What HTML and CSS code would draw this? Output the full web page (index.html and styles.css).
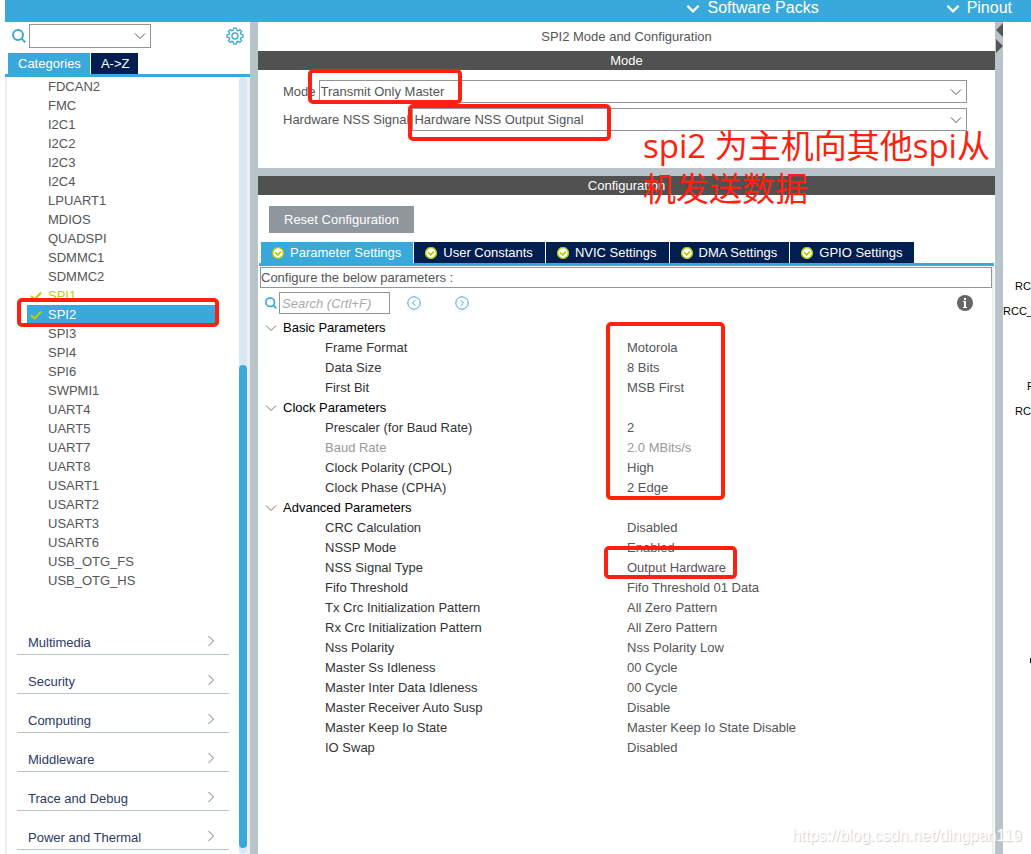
FILE: index.html
```html
<!DOCTYPE html>
<html lang="en">

<head>
  <meta charset="UTF-8" />
  <title>SPI2 Mode and Configuration</title>
  <link rel="stylesheet" href="styles.css">
</head>

<body>
  <!-- shared icons -->
  <svg class="defs" width="0" height="0">
    <symbol id="down" viewBox="0 0 12 8"><path d="M1 1.5 L6 6.5 L11 1.5" /></symbol>
    <symbol id="next" viewBox="0 0 8 12"><path d="M1.5 1 L6.5 6 L1.5 11" /></symbol>
    <symbol id="search" viewBox="0 0 14 14"><circle cx="6" cy="6" r="5" /><path d="M9.6 9.6 L13.2 13.2" /></symbol>
    <symbol id="tick" viewBox="0 0 12 10"><path d="M1 5 L4.5 8.5 L11 1.5" /></symbol>
    <symbol id="ok" viewBox="0 0 12 12"><circle cx="6" cy="6" r="5.4" fill="#fff" /><path d="M3 5.2 L5.7 7.9 L9 4.6" /></symbol>
  </svg>

  <div class="app">
    <header class="topbar">
      <button class="menu"><svg class="chev"><use href="#down" /></svg>Software Packs</button>
      <button class="menu"><svg class="chev"><use href="#down" /></svg>Pinout</button>
    </header>

    <div class="work">
      <aside class="side">
        <div class="side-top">
          <svg class="search"><use href="#search" /></svg>
          <div class="combo find">
            <select aria-label="Find peripheral"><option></option></select>
            <svg class="arrow"><use href="#down" /></svg>
          </div>
          <button class="gear" aria-label="Settings">
            <svg viewBox="0 0 18 18"><path d="M7.6 1.2 L10.4 1.2 L10.8 3.2 L12.2 3.8 L13.9 2.7 L15.6 4.5 L14.5 6.1 L15 7.5 L17 7.9 L17 10.2 L15 10.6 L14.4 12 L15.6 13.7 L13.8 15.4 L12.1 14.3 L10.8 14.8 L10.4 16.8 L7.6 16.8 L7.2 14.8 L5.9 14.3 L4.2 15.4 L2.4 13.7 L3.6 12 L3 10.6 L1 10.2 L1 7.9 L3 7.5 L3.5 6.1 L2.4 4.5 L4.1 2.7 L5.8 3.8 L7.2 3.2 Z" /><circle cx="9" cy="9" r="3" /></svg>
          </button>
        </div>
        <nav class="side-tabs">
          <button class="tab on">Categories</button>
          <button class="tab">A-&gt;Z</button>
        </nav>
        <div class="side-body">
          <div class="tree">
            <ul class="periphs">
              <li>FDCAN2</li>
              <li>FMC</li>
              <li>I2C1</li>
              <li>I2C2</li>
              <li>I2C3</li>
              <li>I2C4</li>
              <li>LPUART1</li>
              <li>MDIOS</li>
              <li>QUADSPI</li>
              <li>SDMMC1</li>
              <li>SDMMC2</li>
              <li class="used"><svg class="tick"><use href="#tick" /></svg>SPI1</li>
              <li class="used current"><svg class="tick"><use href="#tick" /></svg>SPI2</li>
              <li>SPI3</li>
              <li>SPI4</li>
              <li>SPI6</li>
              <li>SWPMI1</li>
              <li>UART4</li>
              <li>UART5</li>
              <li>UART7</li>
              <li>UART8</li>
              <li>USART1</li>
              <li>USART2</li>
              <li>USART3</li>
              <li>USART6</li>
              <li>USB_OTG_FS</li>
              <li>USB_OTG_HS</li>
            </ul>
            <ul class="groups">
              <li>Multimedia<svg class="go"><use href="#next" /></svg></li>
              <li>Security<svg class="go"><use href="#next" /></svg></li>
              <li>Computing<svg class="go"><use href="#next" /></svg></li>
              <li>Middleware<svg class="go"><use href="#next" /></svg></li>
              <li>Trace and Debug<svg class="go"><use href="#next" /></svg></li>
              <li>Power and Thermal<svg class="go"><use href="#next" /></svg></li>
            </ul>
          </div>
          <div class="scroll"><div class="thumb"></div></div>
        </div>
      </aside>

      <div class="split"></div>

      <main class="main">
        <h1 class="title">SPI2 Mode and Configuration</h1>
        <h2 class="bar">Mode</h2>
        <div class="mode">
          <div class="field">
            <label for="mode">Mode</label>
            <div class="combo">
              <select id="mode"><option>Transmit Only Master</option></select>
              <svg class="arrow"><use href="#down" /></svg>
            </div>
          </div>
          <div class="field">
            <label for="nss">Hardware NSS Signal</label>
            <div class="combo">
              <select id="nss"><option>Hardware NSS Output Signal</option></select>
              <svg class="arrow"><use href="#down" /></svg>
            </div>
          </div>
        </div>
        <div class="hsplit"></div>
        <h2 class="bar">Configuration</h2>
        <div class="config">
          <button class="reset">Reset Configuration</button>
          <nav class="tabs">
            <button class="tab on"><svg class="ok"><use href="#ok" /></svg>Parameter Settings</button>
            <button class="tab"><svg class="ok"><use href="#ok" /></svg>User Constants</button>
            <button class="tab"><svg class="ok"><use href="#ok" /></svg>NVIC Settings</button>
            <button class="tab"><svg class="ok"><use href="#ok" /></svg>DMA Settings</button>
            <button class="tab"><svg class="ok"><use href="#ok" /></svg>GPIO Settings</button>
          </nav>
          <div class="panel">
            <p class="hint">Configure the below parameters :</p>
            <div class="tools">
              <svg class="search small"><use href="#search" /></svg>
              <input class="query" type="text" placeholder="Search (Crtl+F)" aria-label="Search">
              <button class="step" aria-label="Previous"><svg viewBox="0 0 14 14"><circle cx="7" cy="7" r="6.2" /><path d="M8.3 4.2 L5.5 7 L8.3 9.8" /></svg></button>
              <button class="step" aria-label="Next"><svg viewBox="0 0 14 14"><circle cx="7" cy="7" r="6.2" /><path d="M5.7 4.2 L8.5 7 L5.7 9.8" /></svg></button>
              <button class="info" aria-label="Information"><svg viewBox="0 0 16 16"><circle cx="8" cy="8" r="8" /><path d="M7 3 H9 V5 H7 Z M6 6 H9 V12 H10 V13 H6 V12 H7 V7 H6 Z" /></svg></button>
            </div>
            <table class="params">
              <tr class="group"><th colspan="2"><svg class="fold"><use href="#down" /></svg>Basic Parameters</th></tr>
              <tr><td>Frame Format</td><td>Motorola</td></tr>
              <tr><td>Data Size</td><td>8 Bits</td></tr>
              <tr><td>First Bit</td><td>MSB First</td></tr>
              <tr class="group"><th colspan="2"><svg class="fold"><use href="#down" /></svg>Clock Parameters</th></tr>
              <tr><td>Prescaler (for Baud Rate)</td><td>2</td></tr>
              <tr class="off"><td>Baud Rate</td><td>2.0 MBits/s</td></tr>
              <tr><td>Clock Polarity (CPOL)</td><td>High</td></tr>
              <tr><td>Clock Phase (CPHA)</td><td>2 Edge</td></tr>
              <tr class="group"><th colspan="2"><svg class="fold"><use href="#down" /></svg>Advanced Parameters</th></tr>
              <tr><td>CRC Calculation</td><td>Disabled</td></tr>
              <tr><td>NSSP Mode</td><td>Enabled</td></tr>
              <tr><td>NSS Signal Type</td><td>Output Hardware</td></tr>
              <tr><td>Fifo Threshold</td><td>Fifo Threshold 01 Data</td></tr>
              <tr><td>Tx Crc Initialization Pattern</td><td>All Zero Pattern</td></tr>
              <tr><td>Rx Crc Initialization Pattern</td><td>All Zero Pattern</td></tr>
              <tr><td>Nss Polarity</td><td>Nss Polarity Low</td></tr>
              <tr><td>Master Ss Idleness</td><td>00 Cycle</td></tr>
              <tr><td>Master Inter Data Idleness</td><td>00 Cycle</td></tr>
              <tr><td>Master Receiver Auto Susp</td><td>Disable</td></tr>
              <tr><td>Master Keep Io State</td><td>Master Keep Io State Disable</td></tr>
              <tr><td>IO Swap</td><td>Disabled</td></tr>
            </table>
          </div>
        </div>
      </main>

      <div class="split">
        <svg class="collapse" viewBox="0 0 8 32"><path d="M8 1 V15 L1 8 Z M1 17 V31 L8 24 Z" /></svg>
      </div>

      <!-- chip view, only its left edge is visible -->
      <section class="chip">
        <span class="pin pin1">RCC_OSC32_IN</span>
        <span class="pin pin2">RCC_OSC32_OUT</span>
        <span class="pin pin3">PH0</span>
        <span class="pin pin4">RCC_OSC_IN</span>
        <i class="pin mark"></i>
      </section>
    </div>
  </div>

  <!-- notes drawn over the window -->
  <div class="note note-mode"></div>
  <div class="note note-nss"></div>
  <div class="note note-spi"></div>
  <div class="note note-values"></div>
  <div class="note note-output"></div>
  <p class="remark">spi2 为主机向其他spi从<br>机发送数据</p>
  <span class="mark-url">https://blog.csdn.net/dingpan119</span>
</body>

</html>
```

FILE: styles.css
```css
* {
  padding: 0;
  margin: 0;
  list-style: none;
  box-sizing: border-box;
}

body {
  position: relative;
  height: 100vh;
  overflow: hidden;
  background: #fff;
  color: #545556;
  font: 13px/16px "Liberation Sans", Arial, "Noto Sans CJK SC", sans-serif;
}

button,
input,
select {
  font: inherit;
  color: inherit;
  border: 0;
  background: none;
}

svg {
  fill: none;
  stroke: currentColor;
  flex: none;
}

.defs {
  position: absolute;
}

.app {
  display: flex;
  flex-direction: column;
  height: 100%;
  padding-left: 5px;
}

/* top bar */
.topbar {
  display: flex;
  justify-content: flex-end;
  align-items: flex-start;
  gap: 127px;
  height: 22px;
  flex: none;
  padding-right: 19px;
  background: #39a9dc;
}

.menu {
  display: flex;
  align-items: center;
  gap: 7px;
  font-size: 16px;
  line-height: 16px;
  color: #fff;
}

.chev {
  width: 14px;
  height: 9px;
  stroke-width: 2;
}

.work {
  display: flex;
  flex: 1;
  min-height: 0;
}

.split {
  width: 8px;
  flex: none;
  background: #b9c4ca;
}

.collapse {
  display: block;
  width: 8px;
  height: 32px;
  fill: #555;
  stroke: none;
}

/* left side */
.side {
  display: flex;
  flex-direction: column;
  width: 245px;
  flex: none;
}

.side-top {
  display: flex;
  align-items: center;
  height: 31px;
  padding: 0 6px 4px 7px;
}

.search {
  width: 14px;
  height: 14px;
  margin-right: 3px;
  color: #39a9dc;
  stroke-width: 2;
}

.combo {
  display: flex;
  align-items: center;
  flex: 1;
  position: relative;
}

.combo select {
  appearance: none;
  width: 100%;
  height: 23px;
  padding-left: 1px;
  border: 1px solid #8f979c;
  border-radius: 0;
  background: #fff;
}

.arrow {
  position: absolute;
  right: 5px;
  width: 12px;
  height: 8px;
  pointer-events: none;
}

.find {
  flex: none;
  width: 122px;
}

.find select {
  height: 24px;
}

.gear {
  margin-left: auto;
  width: 18px;
  height: 18px;
  color: #39a9dc;
}

.gear svg {
  display: block;
  stroke-width: 1.3;
}

.side-tabs {
  display: flex;
  gap: 1px;
  padding-left: 3px;
  border-bottom: 3px solid #39a9dc;
}

.tab {
  display: flex;
  align-items: center;
  height: 21px;
  background: #001f50;
  color: #fff;
}

.tab.on {
  background: #39a9dc;
}

.side-tabs .tab {
  padding: 0 9px 0 10px;
}

.side-body {
  display: flex;
  flex: 1;
  min-height: 0;
  border-left: 2px solid #eee;
  border-right: 3px solid #eef1f3;
}

.tree {
  flex: 1;
  overflow: hidden;
}

.periphs li {
  display: flex;
  align-items: center;
  height: 19px;
  margin: 0 20px;
  padding-left: 21px;
}

.periphs .used {
  padding-left: 3px;
  color: #bccf00;
}

.periphs .current {
  background: #39a9dc;
  color: #fff;
}

.tick {
  width: 12px;
  height: 10px;
  margin-right: 6px;
  color: #bccf00;
  stroke-width: 2;
}

.groups {
  margin: 26px 10px 0;
}

.groups li {
  display: flex;
  justify-content: space-between;
  height: 39px;
  padding: 19px 14px 3px 11px;
  border-bottom: 1px solid #b9c4ca;
  color: #2b3a67;
}

.go {
  width: 8px;
  height: 12px;
  color: #777;
}

.scroll {
  width: 8px;
  padding: 288px 0 6px;
  border-radius: 4px;
  background: #d9e8f5;
}

.thumb {
  height: 100%;
  border-radius: 4px;
  background: #39a9dc;
}

/* middle */
.main {
  display: flex;
  flex-direction: column;
  flex: 1;
  min-width: 0;
}

.title {
  height: 29px;
  font-size: 13px;
  font-weight: normal;
  line-height: 29px;
  text-align: center;
}

.bar {
  background: #505150;
  color: #fff;
  font-size: 13px;
  font-weight: normal;
  line-height: 19px;
  text-align: center;
}

.mode {
  display: flex;
  flex-direction: column;
  gap: 5px;
  height: 98px;
  padding: 10px 28px 0 25px;
}

.field {
  display: flex;
  align-items: center;
  gap: 3px;
}

.hsplit {
  height: 8px;
  background: #b9c4ca;
}

.config {
  display: flex;
  flex-direction: column;
  flex: 1;
  padding: 11px 1px 0;
}

.reset {
  align-self: flex-start;
  height: 27px;
  margin-left: 10px;
  padding: 0 15px;
  background: #8f979c;
  color: #fff;
}

.tabs {
  display: flex;
  gap: 1px;
  margin-top: 9px;
  padding-left: 2px;
  border-bottom: 3px solid #39a9dc;
}

.tabs .tab {
  padding: 0 12px 0 11px;
}

.ok {
  width: 12px;
  height: 12px;
  margin-right: 6px;
  color: #b3c800;
  stroke-width: 1.5;
}

.panel {
  flex: 1;
  padding: 1px 0 0 1px;
  border-right: 2px solid #eee;
}

.hint {
  height: 21px;
  line-height: 19px;
  border: 1px solid #8f979c;
}

.tools {
  display: flex;
  align-items: center;
  height: 30px;
  padding: 0 19px 0 5px;
}

.search.small {
  width: 12px;
  height: 12px;
  margin-right: 2px;
}

.query {
  width: 111px;
  height: 22px;
  padding-left: 2px;
  border: 1px solid #8f979c;
}

.query::placeholder {
  color: #aaa;
  font-style: italic;
}

.step {
  width: 14px;
  height: 14px;
  margin-left: 17px;
  color: #39a9dc;
}

.step + .step {
  margin-left: 34px;
}

.step svg,
.info svg {
  display: block;
}

.info {
  width: 16px;
  height: 16px;
  margin-left: auto;
}

.info svg {
  stroke: none;
}

.info circle {
  fill: #666;
}

.info path {
  fill: #fff;
}

.params {
  width: 100%;
  border-collapse: collapse;
  table-layout: fixed;
}

.params th,
.params td {
  height: 20px;
  text-align: left;
  font-weight: normal;
}

.params th {
  padding-left: 5px;
  color: #000;
}

.params td {
  width: 50%;
  padding-left: 1px;
}

.params td:first-child {
  padding-left: 65px;
  color: #333;
}

.params .off td {
  color: #999;
}

.fold {
  width: 12px;
  height: 8px;
  margin-right: 6px;
  color: #777;
}

/* chip pins on the canvas */
.chip {
  position: relative;
  width: 28px;
  flex: none;
  overflow: hidden;
}

.pin {
  position: absolute;
  color: #000;
  font-size: 11px;
  line-height: 14px;
  white-space: nowrap;
}

.pin1 {
  left: 12px;
  top: 257px;
}

.pin2 {
  left: 0;
  top: 282px;
}

.pin3 {
  left: 24px;
  top: 357px;
}

.pin4 {
  left: 12px;
  top: 382px;
}

.mark {
  right: 0;
  top: 636px;
  width: 1px;
  height: 5px;
  background: #000;
}

/* red notes */
.note {
  position: absolute;
  border: 4px solid #ff2010;
  border-radius: 5px;
}

.note-mode {
  left: 308px;
  top: 69px;
  width: 154px;
  height: 35px;
}

.note-nss {
  left: 408px;
  top: 104px;
  width: 203px;
  height: 37px;
}

.note-spi {
  left: 17px;
  top: 298px;
  width: 202px;
  height: 29px;
}

.note-values {
  left: 606px;
  top: 322px;
  width: 119px;
  height: 178px;
}

.note-output {
  left: 604px;
  top: 546px;
  width: 133px;
  height: 33px;
}

.remark {
  position: absolute;
  left: 643px;
  top: 124px;
  color: #ff2010;
  font: 33px/43px "Open Sans", "Noto Sans CJK SC", sans-serif;
  white-space: nowrap;
}

.mark-url {
  position: absolute;
  right: 9px;
  bottom: 9px;
  color: #fff;
  font-size: 16px;
  line-height: 18px;
  text-shadow: 1px 1px 1px #ccc;
}
```
